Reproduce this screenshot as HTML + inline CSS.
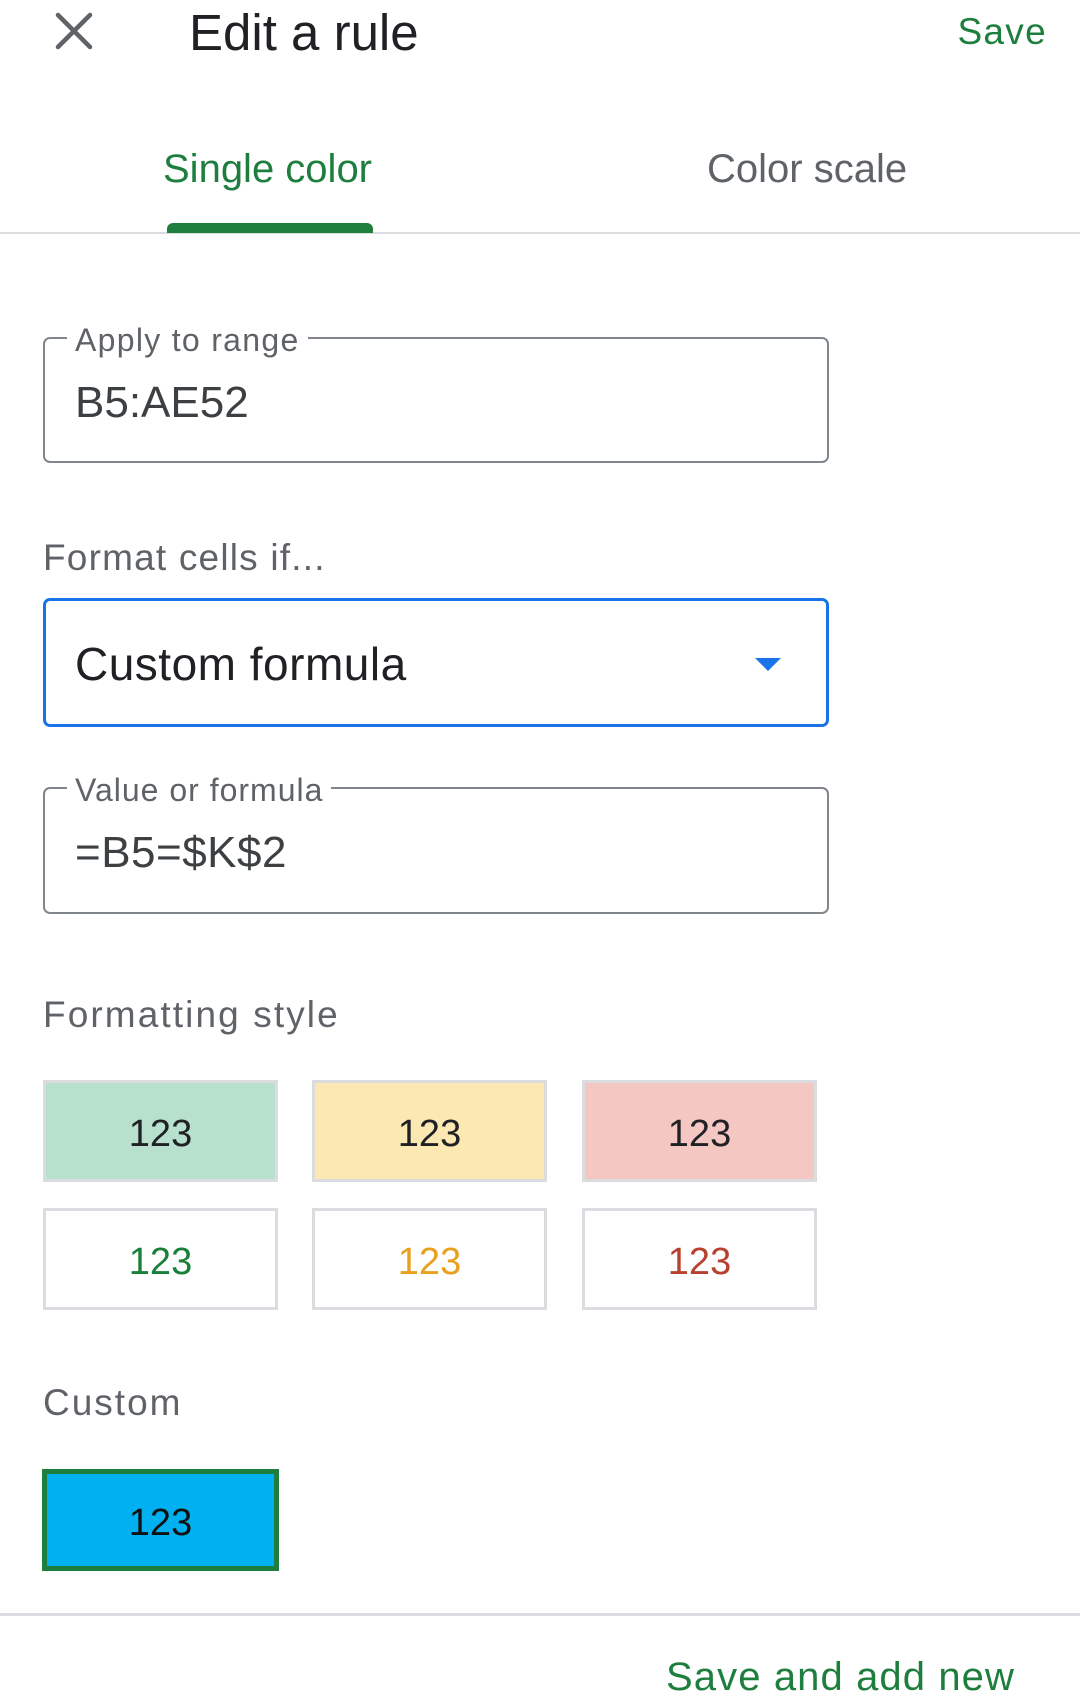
<!DOCTYPE html>
<html><head><meta charset="utf-8"><style>
*{margin:0;padding:0;box-sizing:border-box}
html,body{width:1080px;height:1705px;background:#fff;overflow:hidden;font-family:"Liberation Sans",sans-serif}
.t{position:absolute;line-height:1;white-space:nowrap}
.box{position:absolute;border:2px solid #80868b;border-radius:7px}
.lbl{position:absolute;background:#fff;padding:0 8px;line-height:1;font-size:32px;color:#5f6368;white-space:nowrap}
.sw{position:absolute;width:235px;height:102px;border:3px solid #dadce0;display:flex;align-items:center;justify-content:center;font-size:38px;color:#202124;padding-top:6px}
</style></head><body>
<svg style="position:absolute;left:54px;top:11px" width="40" height="40" viewBox="0 0 40 40"><path d="M4 4L36 36M36 4L4 36" stroke="#5f6368" stroke-width="4.5" stroke-linecap="round"/></svg>
<div class="t" style="left:189px;top:7px;font-size:51px;color:#202124">Edit a rule</div>
<div class="t" style="right:33px;top:13px;font-size:37px;color:#1e7e3e;letter-spacing:1.3px">Save</div>
<div class="t" style="left:163px;top:149px;font-size:40px;color:#1e7e3e">Single color</div>
<div class="t" style="left:707px;top:149px;font-size:40px;color:#5f6368">Color scale</div>
<div style="position:absolute;left:0;top:232px;width:1080px;height:2px;background:#dadce0"></div>
<div style="position:absolute;left:167px;top:223px;width:206px;height:10px;background:#1e7e3e;border-radius:6px 6px 0 0"></div>

<div class="box" style="left:43px;top:337px;width:786px;height:126px"></div>
<div class="lbl" style="left:67px;top:324px;letter-spacing:1.3px">Apply to range</div>
<div class="t" style="left:75px;top:381px;font-size:44px;color:#3c4043">B5:AE52</div>

<div class="t" style="left:43px;top:539px;font-size:37px;color:#5f6368;letter-spacing:1.2px">Format cells if...</div>
<div style="position:absolute;left:43px;top:598px;width:786px;height:129px;border:3px solid #1a73e8;border-radius:7px"></div>
<div class="t" style="left:75px;top:641px;font-size:46px;color:#202124;letter-spacing:0.5px">Custom formula</div>
<svg style="position:absolute;left:755px;top:658px" width="26" height="14" viewBox="0 0 26 14"><path d="M0 0H26L13 13Z" fill="#1a73e8"/></svg>

<div class="box" style="left:43px;top:787px;width:786px;height:127px"></div>
<div class="lbl" style="left:67px;top:774px;letter-spacing:1px">Value or formula</div>
<div class="t" style="left:75px;top:831px;font-size:44px;color:#3c4043;letter-spacing:0.5px">=B5=$K$2</div>

<div class="t" style="left:43px;top:996px;font-size:37px;color:#5f6368;letter-spacing:2.1px">Formatting style</div>
<div class="sw" style="left:43px;top:1080px;background:#b7e1cd">123</div>
<div class="sw" style="left:312px;top:1080px;background:#fce8b2">123</div>
<div class="sw" style="left:582px;top:1080px;background:#f4c7c3">123</div>
<div class="sw" style="left:43px;top:1208px;color:#188038">123</div>
<div class="sw" style="left:312px;top:1208px;color:#e8a01e">123</div>
<div class="sw" style="left:582px;top:1208px;color:#b7412f">123</div>

<div class="t" style="left:43px;top:1384px;font-size:37px;color:#5f6368;letter-spacing:2px">Custom</div>
<div class="sw" style="left:42px;top:1469px;width:237px;height:102px;border:5px solid #1e7e3e;background:#00b0f0;color:#111">123</div>

<div style="position:absolute;left:0;top:1613px;width:1080px;height:3px;background:#dadce0"></div>
<div class="t" style="right:65px;top:1657px;font-size:40px;color:#1e7e3e;letter-spacing:1.1px">Save and add new</div>
</body></html>
